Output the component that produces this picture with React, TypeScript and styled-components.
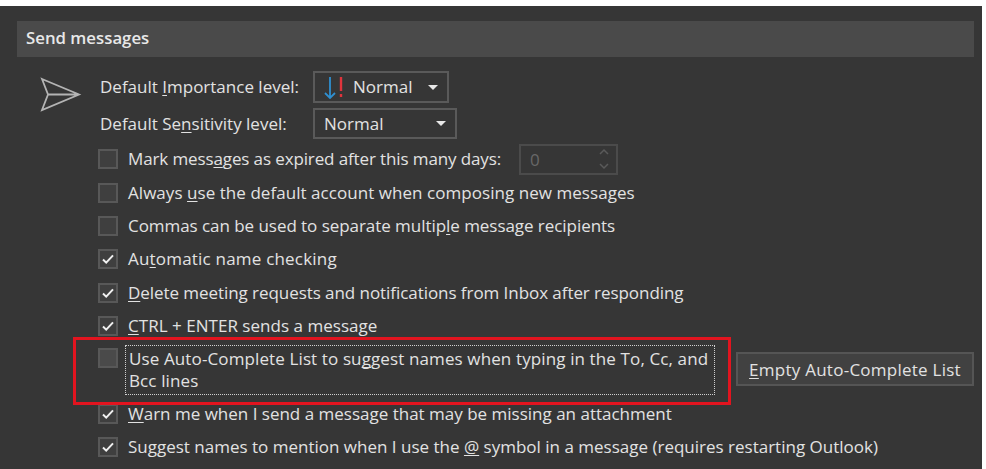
import React from "react";
import styled, { createGlobalStyle } from "styled-components";

const Global = createGlobalStyle`
  html, body { margin: 0; padding: 0; background: #fff; }
  #root { width: 986px; height: 469px; overflow: hidden; }
`;

const Panel = styled.div`
  position: relative;
  box-sizing: border-box;
  width: 982px;
  height: 463px;
  margin-top: 6px;
  padding: 15px 8px 0 17px;
  background: #363636;
  color: #e2e2e2;
  font-family: "Open Sans", "Noto Sans", sans-serif;
  font-size: 17px;
  overflow: hidden;
  u { text-underline-offset: 2px; text-decoration-thickness: 1px; text-decoration-skip-ink: none; }
`;

const Header = styled.div`
  box-sizing: border-box;
  height: 36px;
  padding: 0 0 3px 9px;
  display: flex;
  align-items: center;
  background: #4a4a4a;
  font-weight: 600;
  font-size: 16.8px;
  color: #e8e8e8;
`;

const Body = styled.div`
  display: flex;
  margin-top: 14px;
`;

const IconColumn = styled.div`
  width: 81px;
  flex: none;
  padding: 6px 0 0 23px;
  box-sizing: border-box;
`;

const Content = styled.div`
  flex: 1;
  display: flex;
  flex-direction: column;
`;

const FieldRow = styled.div<{ $mb: number }>`
  display: flex;
  align-items: center;
  margin-bottom: ${(p) => p.$mb}px;
`;

const FieldLabel = styled.div`
  width: 215px;
  flex: none;
  padding: 0 0 1px 2px;
  box-sizing: border-box;
  white-space: nowrap;
`;

const Select = styled.div<{ $w: number; $h: number }>`
  box-sizing: border-box;
  width: ${(p) => p.$w}px;
  height: ${(p) => p.$h}px;
  border: 2px solid #5a5a5a;
  display: flex;
  align-items: center;
  padding: 0 9px 0 9px;
  gap: 6px;
`;

const SelectText = styled.span`
  flex: 1;
  padding-bottom: 1px;
`;

const Caret = styled.span`
  width: 0;
  height: 0;
  border-left: 5px solid transparent;
  border-right: 5px solid transparent;
  border-top: 5px solid #e8e8e8;
`;

const CheckRow = styled.div`
  display: flex;
  align-items: center;
  height: 33.4px;
`;

const Box = styled.span<{ $light?: boolean }>`
  box-sizing: border-box;
  width: 20px;
  height: 20px;
  flex: none;
  border: 2px solid #585858;
  background: ${(p) => (p.$light ? "#4a4a4a" : "#3f3f3f")};
  display: flex;
  align-items: center;
  justify-content: center;
`;

const RowText = styled.span<{ $ls?: number }>`
  margin-left: 10px;
  padding-bottom: 1px;
  white-space: nowrap;
  letter-spacing: ${(p) => p.$ls ?? 0}px;
`;

const Spin = styled.div`
  box-sizing: border-box;
  width: 99px;
  height: 31px;
  margin-left: 18px;
  border: 2px solid #4b4b4b;
  display: flex;
  align-items: center;
  justify-content: space-between;
  padding: 0 6px 0 9px;
  color: #686868;
`;

const FocusRow = styled.div`
  display: flex;
  align-items: flex-start;
  height: 54px;
  padding-top: 2px;
  box-sizing: border-box;
`;

const FocusBoxWrap = styled.div`
  padding-top: 3px;
`;

const FocusLabel = styled.div`
  box-sizing: border-box;
  width: 590px;
  height: 50px;
  margin-left: 7px;
  padding: 2px 0 0 3px;
  border: 1px dotted #d0d0d0;
  line-height: 22px;
  white-space: nowrap;
  letter-spacing: 0.12px;
`;

const AutoButton = styled.div`
  box-sizing: border-box;
  width: 238px;
  height: 34px;
  margin: 7px 0 0 21px;
  padding-top: 1px;
  border: 2px solid #555;
  background: #414141;
  display: flex;
  align-items: center;
  justify-content: center;
  white-space: nowrap;
  letter-spacing: 0.25px;
`;

const ImportanceSvg = styled.svg`
  display: block;
  flex: none;
  margin-left: -3px;
`;

const RedMark = styled.div`
  position: absolute;
  left: 73px;
  top: 331px;
  width: 658px;
  height: 68px;
  box-sizing: border-box;
  border: 3px solid #e2141f;
  pointer-events: none;
`;

const Tick = () => (
  <svg width="14" height="12" viewBox="0 0 14 12">
    <path d="M2 6.5 L5.2 9.6 L12 2.4" fill="none" stroke="#f0f0f0" strokeWidth="2" />
  </svg>
);

const SendIcon = () => (
  <svg width="42" height="36" viewBox="0 0 42 36" style={{ display: "block" }}>
    <path d="M2 2 L39 17.5 L2 33 L8 17.5 Z M8 17.5 H39" fill="none" stroke="#b4b4b4" strokeWidth="1.8" strokeLinejoin="miter" />
  </svg>
);

const Importance = () => (
  <ImportanceSvg width="26" height="24" viewBox="0 0 26 24">
    <path d="M9 2 V23 M4 18 L9 23 L14 18" fill="none" stroke="#2f8fd0" strokeWidth="1.8" />
    <path d="M20 2 V16" stroke="#e0343c" strokeWidth="2.4" />
    <path d="M20 19 V22" stroke="#e0343c" strokeWidth="2.4" />
  </ImportanceSvg>
);

const SpinArrows = () => (
  <svg width="12" height="22" viewBox="0 0 12 22">
    <path d="M2 6 L6 2 L10 6 M2 16 L6 20 L10 16" fill="none" stroke="#5a5a5a" strokeWidth="1.5" />
  </svg>
);

const Check = ({ checked, children, extra, ls }: { checked?: boolean; children: React.ReactNode; extra?: React.ReactNode; ls?: number }) => (
  <CheckRow>
    <Box>{checked && <Tick />}</Box>
    <RowText $ls={ls}>{children}</RowText>
    {extra}
  </CheckRow>
);

export default function App() {
  return (
    <>
      <Global />
      <Panel>
        <Header>Send messages</Header>
        <Body>
          <IconColumn>
            <SendIcon />
          </IconColumn>
          <Content>
            <FieldRow $mb={5}>
              <FieldLabel>Default <u>I</u>mportance level:</FieldLabel>
              <Select $w={136} $h={32}>
                <Importance />
                <SelectText>Normal</SelectText>
                <Caret />
              </Select>
            </FieldRow>
            <FieldRow $mb={3.5}>
              <FieldLabel>Default Se<u>n</u>sitivity level:</FieldLabel>
              <Select $w={144} $h={31}>
                <SelectText>Normal</SelectText>
                <Caret />
              </Select>
            </FieldRow>
            <Check ls={-0.12} extra={<Spin>0<SpinArrows /></Spin>}>Mark mess<u>a</u>ges as expired after this many days:</Check>
            <Check ls={0.05}>Always <u>u</u>se the default account when composing new messages</Check>
            <Check ls={-0.05}>Commas can be used to separate multip<u>l</u>e message recipients</Check>
            <Check checked ls={0.2}>Au<u>t</u>omatic name checking</Check>
            <Check checked ls={-0.06}><u>D</u>elete meeting requests and notifications from Inbox after responding</Check>
            <Check checked ls={0.03}><u>C</u>TRL + ENTER sends a message</Check>
            <FocusRow>
              <FocusBoxWrap><Box $light /></FocusBoxWrap>
              <FocusLabel>Use Auto-Complete List to su<u>g</u>gest names when typing in the To, Cc, and<br />Bcc lines</FocusLabel>
              <AutoButton><span><u>E</u>mpty Auto-Complete List</span></AutoButton>
            </FocusRow>
            <Check checked><u>W</u>arn me when I send a message that may be missing an attachment</Check>
            <Check checked>Suggest names to mention when I use the <u>@</u> symbol in a message (requires restarting Outlook)</Check>
          </Content>
        </Body>
        <RedMark />
      </Panel>
    </>
  );
}
